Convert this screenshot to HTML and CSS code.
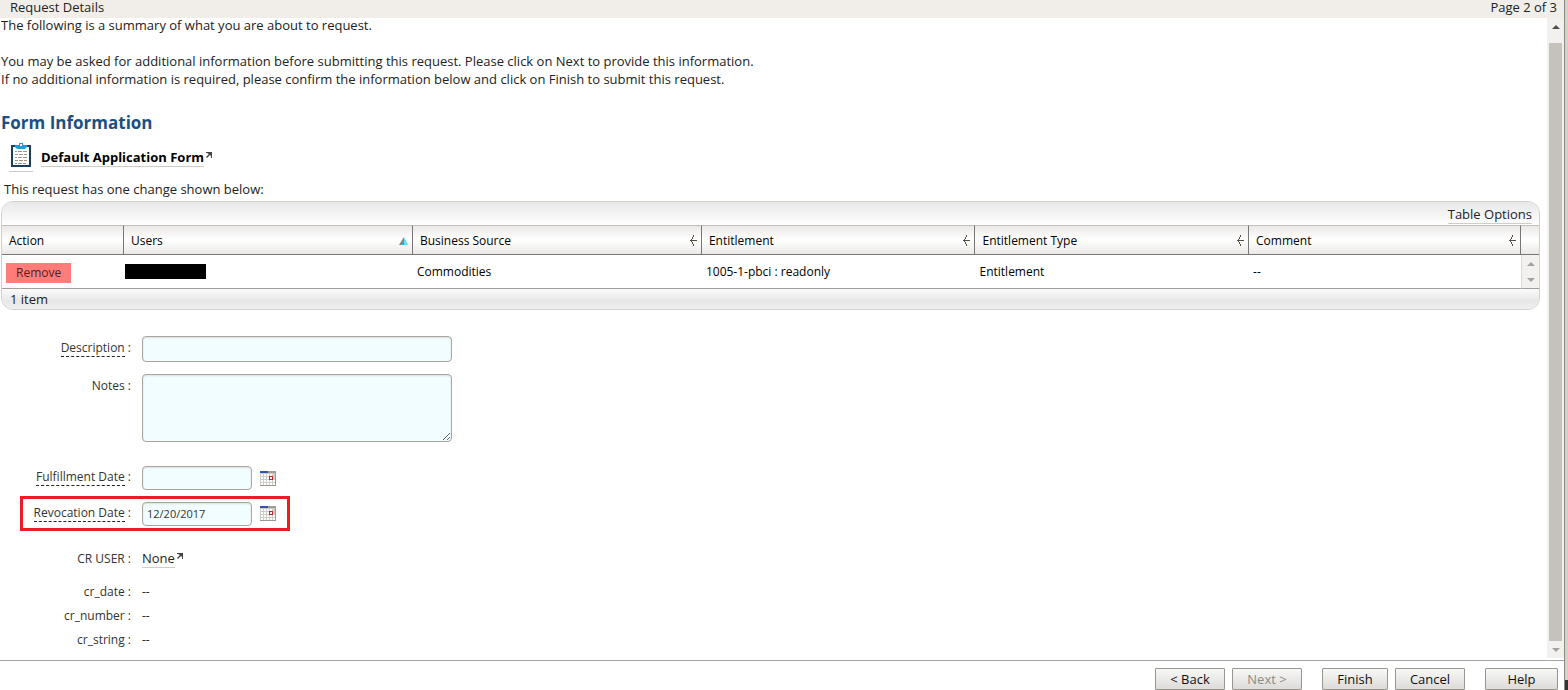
FILE: index.html
```
<!DOCTYPE html>
<html lang="en">
<head>
    <meta charset="UTF-8">
    <meta name="viewport" content="width=device-width, initial-scale=1.0">
    <title>Request Details</title>
    <link rel="stylesheet" href="styles.css">
</head>
<body>
    <!-- shared icons -->
    <svg class="sprite" aria-hidden="true">
        <symbol id="popout" viewBox="0 0 8 8">
            <path d="M1 1h6v6H6V3L2 7 1 6 4 3 2 2H1z" fill="#444"/>
            <path d="M2 1h5v5L5 4z" fill="#444"/>
        </symbol>
        <symbol id="sort" viewBox="0 0 8 11">
            <path d="M4 0h1v2H4zM3 2h1v2H3zM2 4h1v3H2zM3 7h1v2H3zM4 9h1v2H4zM1 5h7v1H1z" fill="#544f42"/>
        </symbol>
        <symbol id="calendar" viewBox="0 0 16 15">
            <path d="M0 0h16v15H0z" fill="#d0ccc6"/>
            <path d="M1 3h2v2H1zM4 3h2v2H4zM7 3h2v2H7zM10 3h2v2h-2zM1 6h2v2H1zM4 6h2v2H4zM7 6h2v2H7zM1 9h2v2H1zM4 9h2v2H4zM7 9h2v2H7zM10 9h2v2h-2zM13 9h2v2h-2zM1 12h2v2H1zM4 12h2v2H4zM7 12h2v2H7zM10 12h2v2h-2zM13 12h2v2h-2z" fill="#fff"/>
            <path d="M8 0h8v2H8z" fill="#a19d96"/>
            <path d="M0 0h8v2H0z" fill="#3f4fa5"/>
            <path d="M15 2h1v13H0v-1h15z" fill="#9c9891"/>
            <path d="M9 5h4v4H9z" fill="#b8282e"/>
            <path d="M10 6h2v2h-2z" fill="#fff"/>
        </symbol>
    </svg>

    <div class="window">
        <header class="title-bar">
            <span>Request Details</span>
            <span>Page 2 of 3</span>
        </header>

        <div class="middle">
            <main class="content">
                <p>The following is a summary of what you are about to request.</p>
                <p class="intro">You may be asked for additional information before submitting this request. Please click on Next to provide this information.<br>
                If no additional information is required, please confirm the information below and click on Finish to submit this request.</p>

                <h2>Form Information</h2>
                <div class="form-name">
                    <a href="#" class="clipboard" aria-label="Default Application Form">
                        <svg width="22" height="25" viewBox="0 0 22 25">
                            <path d="M1 3h20v21H1z" fill="#fff"/>
                            <path d="M2 3v20h18V3" fill="none" stroke="#173f5f" stroke-width="2"/>
                            <path d="M1 2h5v2H1zM16 2h5v2h-5z" fill="#173f5f"/>
                            <path d="M5 3V2h4V0h4v2h4v2l-2 2H7L5 4z" fill="#1ba1d6"/>
                            <path d="M10 1h2v2h-2z" fill="#fff"/>
                            <path d="M5 8.500h2M8 8.500h4M13 8.500h4M5 11.500h3M9 11.500h4M14 11.500h3M5 14.500h2M8 14.500h4M13 14.500h4M5 17.500h3M9 17.500h4M14 17.500h3M5 20.500h2M8 20.500h4M13 20.500h3" stroke="#9a948c"/>
                        </svg>
                    </a>
                    <a href="#" class="link bold">Default Application Form</a>
                    <svg class="popout" width="8" height="8"><use href="#popout"/></svg>
                </div>

                <p class="summary">This request has one change shown below:</p>

                <section class="grid">
                    <div class="grid-top"><a href="#" class="link">Table Options</a></div>
                    <table>
                        <colgroup>
                            <col class="col-action">
                            <col class="col-wide">
                            <col class="col-wide">
                            <col class="col-mid">
                            <col class="col-mid">
                            <col>
                            <col class="col-scroll">
                        </colgroup>
                        <thead>
                            <tr>
                                <th>Action</th>
                                <th><div class="th">Users <svg width="9" height="8" viewBox="0 0 9 8"><path d="M5 0l4 8H5z" fill="#5fe0fa"/><path d="M5 0v8H0z" fill="#8a8172"/><path d="M5 3v5H2z" fill="#08bce8"/></svg></div></th>
                                <th><div class="th">Business Source <svg width="8" height="11"><use href="#sort"/></svg></div></th>
                                <th><div class="th">Entitlement <svg width="8" height="11"><use href="#sort"/></svg></div></th>
                                <th><div class="th">Entitlement Type <svg width="8" height="11"><use href="#sort"/></svg></div></th>
                                <th><div class="th">Comment <svg width="8" height="11"><use href="#sort"/></svg></div></th>
                                <td></td>
                            </tr>
                        </thead>
                        <tbody>
                            <tr>
                                <td><span class="remove">Remove</span></td>
                                <td class="user-cell"><div class="redacted"></div></td>
                                <td>Commodities</td>
                                <td>1005-1-pbci : readonly</td>
                                <td>Entitlement</td>
                                <td>--</td>
                                <td class="row-scroll">
                                    <div class="arrows">
                                        <i class="arrow up"></i>
                                        <i class="arrow down"></i>
                                    </div>
                                </td>
                            </tr>
                        </tbody>
                    </table>
                    <div class="grid-bottom">1 item</div>
                </section>

                <form class="fields">
                    <div class="row">
                        <label for="description"><span class="hint">Description</span> :</label>
                        <input type="text" id="description" class="wide">
                    </div>
                    <div class="row notes">
                        <label for="notes">Notes :</label>
                        <textarea id="notes" class="wide"></textarea>
                    </div>
                    <div class="row">
                        <label for="fulfillment"><span class="hint">Fulfillment Date</span> :</label>
                        <input type="text" id="fulfillment" class="date">
                        <button type="button" class="pick" aria-label="Pick fulfillment date"><svg width="16" height="15"><use href="#calendar"/></svg></button>
                    </div>
                    <div class="row highlight">
                        <label for="revocation"><span class="hint">Revocation Date</span> :</label>
                        <input type="text" id="revocation" class="date" value="12/20/2017">
                        <button type="button" class="pick" aria-label="Pick revocation date"><svg width="16" height="15"><use href="#calendar"/></svg></button>
                    </div>
                    <div class="row cr-user">
                        <span class="label">CR USER :</span>
                        <a href="#" class="link">None</a>
                        <svg class="popout" width="8" height="8"><use href="#popout"/></svg>
                    </div>
                    <div class="row plain"><span class="label">cr_date :</span><span>--</span></div>
                    <div class="row plain"><span class="label">cr_number :</span><span>--</span></div>
                    <div class="row plain"><span class="label">cr_string :</span><span>--</span></div>
                </form>
            </main>

            <div class="scrollbar">
                <i class="arrow up dark"></i>
                <div class="thumb"></div>
                <i class="arrow down"></i>
            </div>
        </div>

        <footer class="buttons">
            <button type="button">&lt; Back</button>
            <button type="button" disabled>Next &gt;</button>
            <button type="button" class="finish">Finish</button>
            <button type="button">Cancel</button>
            <button type="button" class="help">Help</button>
        </footer>
    </div>
    <div class="edge"></div>
</body>
</html>
```
FILE: styles.css
```
* {
    box-sizing: border-box;
}
body {
    display: flex;
    height: 100vh;
    margin: 0;
    overflow: hidden;
    font-family: "Open Sans", "Noto Sans", sans-serif;
    font-size: 13px;
    line-height: 18px;
    color: #222;
    background: #fff;
}
p, h2 {
    margin: 0;
}
svg {
    display: block;
    flex: none;
}
.sprite {
    position: absolute;
    width: 0;
    height: 0;
}
.window {
    display: flex;
    flex-direction: column;
    flex: 1;
    min-width: 0;
}
/* outer frame of the dialog */
.edge {
    width: 4px;
    border-left: 1px solid #8d8a85;
    background: linear-gradient(#d5d1c8, #d5d1c8) no-repeat 0 0 / 100% calc(100% - 10px), #333;
}
.title-bar {
    display: flex;
    justify-content: space-between;
    height: 18px;
    padding: 0 7px 0 10px;
    line-height: 15px;
    background: #f1eeea;
}
.middle {
    display: flex;
    flex: 1;
    min-height: 0;
}
.content {
    flex: 1;
    min-width: 0;
    margin-top: -2px;
    padding: 0 7px 0 1px;
    overflow: hidden;
}
.intro {
    margin-top: 18px;
}
h2 {
    margin-top: 23px;
    font-size: 17px;
    line-height: 24px;
    font-weight: 700;
    color: #1c4f82;
}
.form-name {
    display: flex;
    align-items: flex-start;
    margin: 8px 0 0 8px;
}
.clipboard {
    padding: 0 1px 3px;
    border-bottom: 1px solid #ccc8c2;
}
.link {
    color: #222;
    text-decoration: none;
    border-bottom: 1px solid #d0ccc6;
}
.form-name .link {
    margin: 5px 0 0 8px;
}
.bold {
    font-weight: 700;
    color: #000;
}
.popout {
    margin-left: 1px;
}
.form-name .popout {
    margin-top: 8px;
}
.summary {
    margin: 8px 0 3px 3px;
}

/* change table */
.grid {
    overflow: hidden;
    border: 1px solid #d2d0c8;
    border-radius: 12px;
}
.grid-top {
    display: flex;
    justify-content: flex-end;
    align-items: flex-end;
    height: 23px;
    padding: 0 7px 1px;
    background: linear-gradient(#e8e8e8, #fff);
}
.grid-top .link {
    line-height: 17px;
}
table {
    width: 100%;
    table-layout: fixed;
    border-collapse: separate;
    border-spacing: 0;
    font-size: 12px;
    color: #000;
}
.col-action {
    width: 122px;
}
.col-wide {
    width: 18.8%;
}
.col-mid {
    width: 17.8%;
}
.col-scroll {
    width: 18px;
}
thead th, thead td {
    height: 30px;
    padding: 1px 7px 0;
    font-weight: normal;
    text-align: left;
    border: solid #777;
    border-width: 1px 1px 1px 0;
    border-top-color: #c4bfb8;
    background: linear-gradient(#ebe9e7, #fff 50%, #ebe9e7);
}
thead td {
    border-right: 0;
}
.th {
    display: flex;
    justify-content: space-between;
    align-items: center;
}
.th svg {
    margin-right: -3px;
}
tbody td {
    height: 34px;
    padding: 0 4px;
    border-bottom: 1px solid #a19d98;
}
.remove {
    display: inline-block;
    margin-top: 3px;
    padding: 0 10px;
    line-height: 20px;
    color: #4c2222;
    background: #ff7c7a;
}
.user-cell {
    padding: 0 1px;
}
.redacted {
    width: 81px;
    height: 15px;
    background: #000;
}
.row-scroll {
    padding: 0;
    border-left: 1px solid #dddbd8;
    background: #f2f1f0;
}
.arrows {
    display: flex;
    flex-direction: column;
    align-items: center;
    gap: 12px;
}
.arrow {
    border: 4px solid transparent;
    border-top: 0;
    border-bottom: 4px solid #a5a29e;
}
.arrow.down {
    border-top: 4px solid #a5a29e;
    border-bottom: 0;
}
.arrow.dark {
    border-bottom-color: #504e4a;
}
.grid-bottom {
    height: 20px;
    padding-left: 8px;
    line-height: 20px;
    background: linear-gradient(#fbfbfb, #e7e7e7 60%, #efefef);
}

/* request fields */
.fields {
    padding-top: 26px;
    font-size: 12px;
}
.row {
    display: flex;
    align-items: center;
    margin-bottom: 12px;
}
.row label, .row .label {
    width: 130px;
    margin-right: 11px;
    text-align: right;
    color: #333;
}
.row label {
    padding-bottom: 2px;
}
.hint {
    border-bottom: 1px dashed #222;
}
.row input, .row textarea {
    margin: 0;
    padding: 2px 4px;
    font-family: inherit;
    font-size: 11px;
    color: #333;
    border: 1px solid #aaa69f;
    border-radius: 4px;
    background: #f1fdff;
    box-shadow: inset 0 1px 2px #ddd;
}
.wide {
    width: 310px;
    height: 26px;
}
.notes {
    align-items: flex-start;
    margin-bottom: 24px;
}
.notes label {
    padding-top: 3px;
}
textarea.wide {
    height: 68px;
}
.date {
    width: 110px;
    height: 24px;
}
.pick {
    margin-left: 8px;
    padding: 0;
    border: 0;
    background: none;
}
.row.highlight {
    width: 270px;
    height: 35px;
    margin: -6px 0 18px 19px;
    border: 3px solid #ed1c24;
}
.highlight label {
    width: 108px;
}
.cr-user {
    margin-bottom: 12px;
}
.cr-user .link {
    font-size: 13px;
}
.cr-user .popout {
    margin-bottom: 6px;
}
.plain {
    height: 24px;
    margin: 0;
}

/* page scrollbar */
.scrollbar {
    display: flex;
    flex-direction: column;
    align-items: center;
    width: 17px;
    margin-bottom: 2px;
    padding: 7px 2px 6px;
    background: #f2f1f0;
}
.thumb {
    flex: 1;
    width: 13px;
    margin: 14px 0 7px;
    background: #c5c1bb;
}

/* wizard buttons */
.buttons {
    display: flex;
    justify-content: flex-end;
    height: 30px;
    padding: 7px 6px 0 0;
    border-top: 1px solid #a8a5a0;
}
.buttons button {
    width: 70px;
    height: 22px;
    margin-left: 7px;
    padding: 0;
    font-family: inherit;
    font-size: 13px;
    line-height: 20px;
    color: #111;
    border: 1px solid #98968f;
    border-radius: 1px;
    background: linear-gradient(#f8f8f7, #dddbd8);
}
.buttons button:disabled {
    color: #8c8a87;
}
.buttons .finish {
    width: 66px;
    margin-left: 20px;
}
.buttons .help {
    width: 73px;
    margin-left: 20px;
}
```
